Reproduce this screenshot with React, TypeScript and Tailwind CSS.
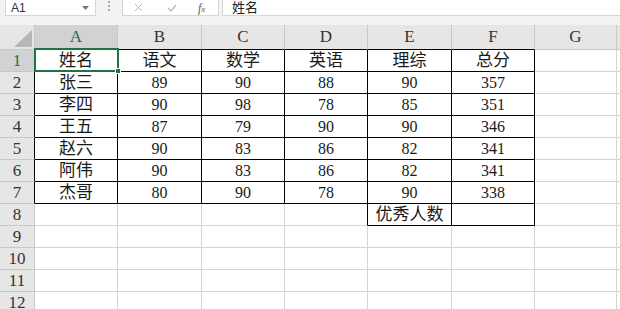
import React from 'react';

const COLS = ['A', 'B', 'C', 'D', 'E', 'F', 'G'];
const COL_W = [83, 84, 83, 83, 84, 83, 82];
const ROW_H = 22;

const DATA: string[][] = [
  ['姓名', '语文', '数学', '英语', '理综', '总分'],
  ['张三', '89', '90', '88', '90', '357'],
  ['李四', '90', '98', '78', '85', '351'],
  ['王五', '87', '79', '90', '90', '346'],
  ['赵六', '90', '83', '86', '82', '341'],
  ['阿伟', '90', '83', '86', '82', '341'],
  ['杰哥', '80', '90', '78', '90', '338'],
  ['', '', '', '', '优秀人数', ''],
];

const font = { fontFamily: '"Liberation Serif", "Noto Sans CJK SC", serif' };

// which cell edges are drawn black (table borders)
function isBlack(r: number, c: number) {
  if (r >= 1 && r <= 7 && c <= 5) return true;
  if (r === 8 && (c === 4 || c === 5)) return true;
  return false;
}

function FormulaBar() {
  return (
    <div className="flex h-[25px] bg-[#f3f3f3]" style={{ fontFamily: '"Liberation Sans", "Noto Sans CJK SC", sans-serif' }}>
      <div className="ml-[5px] flex h-[16px] w-[91px] items-center justify-between border border-t-0 border-[#d6d6d6] bg-white pl-[5px] pr-[6px] text-[12px] text-[#333]">
        <span>A1</span>
        <svg width="7" height="4" viewBox="0 0 7 4"><path d="M0 0h7L3.5 4z" fill="#777" /></svg>
      </div>
      <div className="flex w-[26px] flex-col items-center gap-[2px] pt-[1px]">
        <span className="h-[2px] w-[2px] bg-[#aaa]" />
        <span className="h-[2px] w-[2px] bg-[#aaa]" />
        <span className="h-[2px] w-[2px] bg-[#aaa]" />
      </div>
      <div className="flex h-[16px] w-[97px] items-center border border-t-0 border-[#d6d6d6] bg-white">
        <svg className="ml-[11px]" width="9" height="9" viewBox="0 0 9 9"><path d="M1 1l7 7M8 1L1 8" stroke="#b5b5b5" strokeWidth="1" /></svg>
        <svg className="ml-[24px]" width="10" height="8" viewBox="0 0 10 8"><path d="M1 4l3 3 5-6" stroke="#b5b5b5" strokeWidth="1.2" fill="none" /></svg>
        <span className="ml-[21px] text-[12px] italic text-[#555]" style={font}>f<span className="text-[9px]">x</span></span>
      </div>
      <div className="ml-[3px] flex h-[16px] flex-1 items-center border border-t-0 border-r-0 border-[#d6d6d6] bg-white pl-[9px] text-[13px] leading-none text-[#222]">
        姓名
      </div>
    </div>
  );
}

export default function App() {
  const template = `35px ${COL_W.map((w) => w + 'px').join(' ')} 1fr`;
  const rows = Array.from({ length: 12 }, (_, i) => i + 1);

  return (
    <div className="h-[309px] w-[620px] overflow-hidden bg-white">
      <FormulaBar />
      <div className="relative">
        <div className="grid" style={{ gridTemplateColumns: template }}>
          {/* header row */}
          <div className="relative h-[25px] border-r border-b border-[#c8c8c8] bg-[#e6e6e6]">
            <svg className="absolute right-[2px] bottom-[2px]" width="18" height="17" viewBox="0 0 18 17"><path d="M18 0v17H0z" fill="#b7b7b7" /></svg>
          </div>
          {COLS.map((c, i) => (
            <div
              key={c}
              className={`flex h-[25px] items-end justify-center pb-[1px] border-r border-b text-[17px] leading-[22px] ${
                i === 0
                  ? 'border-r-[#c8c8c8] border-b-[#217346] bg-[#d2d2d2] text-[#217346]'
                  : `border-r-[#c8c8c8] bg-[#e6e6e6] text-[#333] ${i <= 5 ? 'border-b-black' : 'border-b-[#c8c8c8]'}`
              }`}
              style={font}
            >
              {c}
            </div>
          ))}
          <div className="h-[25px] border-b border-[#c8c8c8] bg-[#e6e6e6]" />

          {rows.map((r) => (
            <React.Fragment key={r}>
              <div
                className={`flex items-end justify-center border-r border-b border-b-[#c8c8c8] text-[17px] leading-[21px] ${
                  r === 1 ? 'bg-[#d2d2d2] text-[#217346]' : 'bg-[#e6e6e6] text-[#333]'
                } ${r <= 7 ? 'border-r-black' : 'border-r-[#c8c8c8]'}`}
                style={{ ...font, height: ROW_H }}
              >
                {r}
              </div>
              {COLS.map((c, ci) => {
                const txt = DATA[r - 1]?.[ci] ?? '';
                const blackR = isBlack(r, ci) || (r === 8 && ci === 3);
                const blackB = isBlack(r, ci);
                const cjk = /[^\x00-\x7f]/.test(txt);
                return (
                  <div
                    key={c}
                    className={`flex items-end justify-center whitespace-nowrap border-r border-b leading-[21px] text-[#1a1a1a] ${
                      cjk ? 'text-[17px]' : 'text-[16px]'
                    } ${blackR ? 'border-r-black' : 'border-r-[#d4d4d4]'} ${
                      blackB ? 'border-b-black' : 'border-b-[#d4d4d4]'
                    }`}
                    style={{ ...font, height: ROW_H }}
                  >
                    {txt}
                  </div>
                );
              })}
              <div className="border-b border-[#d4d4d4]" style={{ height: ROW_H }} />
            </React.Fragment>
          ))}
        </div>
        {/* selection of A1 */}
        <div className="pointer-events-none absolute left-[34px] top-[23px] h-[24px] w-[85px] border-2 border-[#217346]">
          <div className="absolute right-[-4px] bottom-[-4px] h-[6px] w-[6px] border border-white bg-[#217346]" />
        </div>
      </div>
    </div>
  );
}
